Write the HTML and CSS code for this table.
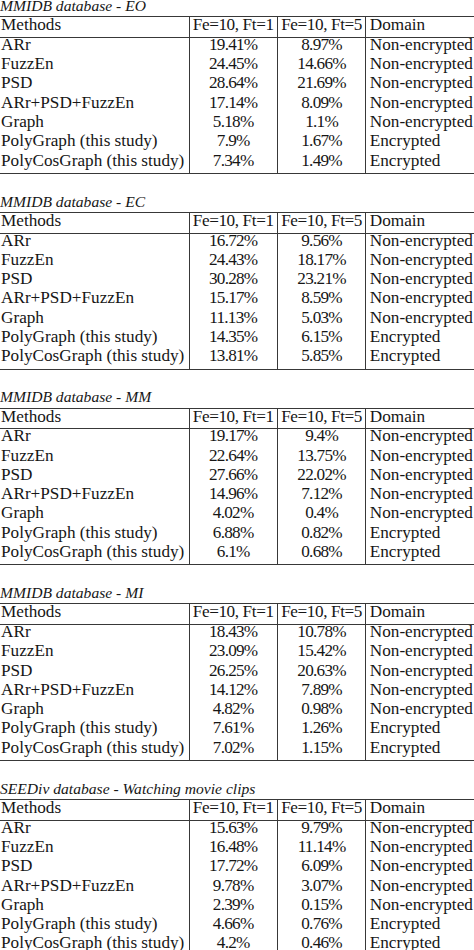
FILE: index.html
```html
<!DOCTYPE html>
<html lang="en">
<head>
<meta charset="utf-8">
<title>Results tables</title>
<link rel="stylesheet" href="styles.css">
</head>
<body>
<main class="page">
  <section class="block">
    <p class="caption">MMIDB database - EO</p>
    <table class="results">
      <thead><tr><th class="m">Methods</th><th class="n">Fe=10, Ft=1</th><th class="n">Fe=10, Ft=5</th><th class="d">Domain</th></tr></thead>
      <tbody>
        <tr><td class="m">ARr</td><td class="n">19.41%</td><td class="n">8.97%</td><td class="d">Non-encrypted</td></tr>
        <tr><td class="m">FuzzEn</td><td class="n">24.45%</td><td class="n">14.66%</td><td class="d">Non-encrypted</td></tr>
        <tr><td class="m">PSD</td><td class="n">28.64%</td><td class="n">21.69%</td><td class="d">Non-encrypted</td></tr>
        <tr><td class="m">ARr+PSD+FuzzEn</td><td class="n">17.14%</td><td class="n">8.09%</td><td class="d">Non-encrypted</td></tr>
        <tr><td class="m">Graph</td><td class="n">5.18%</td><td class="n">1.1%</td><td class="d">Non-encrypted</td></tr>
        <tr><td class="m">PolyGraph (this study)</td><td class="n">7.9%</td><td class="n">1.67%</td><td class="d">Encrypted</td></tr>
        <tr><td class="m">PolyCosGraph (this study)</td><td class="n">7.34%</td><td class="n">1.49%</td><td class="d">Encrypted</td></tr>
      </tbody>
    </table>
  </section>
  <section class="block">
    <p class="caption">MMIDB database - EC</p>
    <table class="results">
      <thead><tr><th class="m">Methods</th><th class="n">Fe=10, Ft=1</th><th class="n">Fe=10, Ft=5</th><th class="d">Domain</th></tr></thead>
      <tbody>
        <tr><td class="m">ARr</td><td class="n">16.72%</td><td class="n">9.56%</td><td class="d">Non-encrypted</td></tr>
        <tr><td class="m">FuzzEn</td><td class="n">24.43%</td><td class="n">18.17%</td><td class="d">Non-encrypted</td></tr>
        <tr><td class="m">PSD</td><td class="n">30.28%</td><td class="n">23.21%</td><td class="d">Non-encrypted</td></tr>
        <tr><td class="m">ARr+PSD+FuzzEn</td><td class="n">15.17%</td><td class="n">8.59%</td><td class="d">Non-encrypted</td></tr>
        <tr><td class="m">Graph</td><td class="n">11.13%</td><td class="n">5.03%</td><td class="d">Non-encrypted</td></tr>
        <tr><td class="m">PolyGraph (this study)</td><td class="n">14.35%</td><td class="n">6.15%</td><td class="d">Encrypted</td></tr>
        <tr><td class="m">PolyCosGraph (this study)</td><td class="n">13.81%</td><td class="n">5.85%</td><td class="d">Encrypted</td></tr>
      </tbody>
    </table>
  </section>
  <section class="block">
    <p class="caption">MMIDB database - MM</p>
    <table class="results">
      <thead><tr><th class="m">Methods</th><th class="n">Fe=10, Ft=1</th><th class="n">Fe=10, Ft=5</th><th class="d">Domain</th></tr></thead>
      <tbody>
        <tr><td class="m">ARr</td><td class="n">19.17%</td><td class="n">9.4%</td><td class="d">Non-encrypted</td></tr>
        <tr><td class="m">FuzzEn</td><td class="n">22.64%</td><td class="n">13.75%</td><td class="d">Non-encrypted</td></tr>
        <tr><td class="m">PSD</td><td class="n">27.66%</td><td class="n">22.02%</td><td class="d">Non-encrypted</td></tr>
        <tr><td class="m">ARr+PSD+FuzzEn</td><td class="n">14.96%</td><td class="n">7.12%</td><td class="d">Non-encrypted</td></tr>
        <tr><td class="m">Graph</td><td class="n">4.02%</td><td class="n">0.4%</td><td class="d">Non-encrypted</td></tr>
        <tr><td class="m">PolyGraph (this study)</td><td class="n">6.88%</td><td class="n">0.82%</td><td class="d">Encrypted</td></tr>
        <tr><td class="m">PolyCosGraph (this study)</td><td class="n">6.1%</td><td class="n">0.68%</td><td class="d">Encrypted</td></tr>
      </tbody>
    </table>
  </section>
  <section class="block">
    <p class="caption">MMIDB database - MI</p>
    <table class="results">
      <thead><tr><th class="m">Methods</th><th class="n">Fe=10, Ft=1</th><th class="n">Fe=10, Ft=5</th><th class="d">Domain</th></tr></thead>
      <tbody>
        <tr><td class="m">ARr</td><td class="n">18.43%</td><td class="n">10.78%</td><td class="d">Non-encrypted</td></tr>
        <tr><td class="m">FuzzEn</td><td class="n">23.09%</td><td class="n">15.42%</td><td class="d">Non-encrypted</td></tr>
        <tr><td class="m">PSD</td><td class="n">26.25%</td><td class="n">20.63%</td><td class="d">Non-encrypted</td></tr>
        <tr><td class="m">ARr+PSD+FuzzEn</td><td class="n">14.12%</td><td class="n">7.89%</td><td class="d">Non-encrypted</td></tr>
        <tr><td class="m">Graph</td><td class="n">4.82%</td><td class="n">0.98%</td><td class="d">Non-encrypted</td></tr>
        <tr><td class="m">PolyGraph (this study)</td><td class="n">7.61%</td><td class="n">1.26%</td><td class="d">Encrypted</td></tr>
        <tr><td class="m">PolyCosGraph (this study)</td><td class="n">7.02%</td><td class="n">1.15%</td><td class="d">Encrypted</td></tr>
      </tbody>
    </table>
  </section>
  <section class="block">
    <p class="caption">SEEDiv database - Watching movie clips</p>
    <table class="results">
      <thead><tr><th class="m">Methods</th><th class="n">Fe=10, Ft=1</th><th class="n">Fe=10, Ft=5</th><th class="d">Domain</th></tr></thead>
      <tbody>
        <tr><td class="m">ARr</td><td class="n">15.63%</td><td class="n">9.79%</td><td class="d">Non-encrypted</td></tr>
        <tr><td class="m">FuzzEn</td><td class="n">16.48%</td><td class="n">11.14%</td><td class="d">Non-encrypted</td></tr>
        <tr><td class="m">PSD</td><td class="n">17.72%</td><td class="n">6.09%</td><td class="d">Non-encrypted</td></tr>
        <tr><td class="m">ARr+PSD+FuzzEn</td><td class="n">9.78%</td><td class="n">3.07%</td><td class="d">Non-encrypted</td></tr>
        <tr><td class="m">Graph</td><td class="n">2.39%</td><td class="n">0.15%</td><td class="d">Non-encrypted</td></tr>
        <tr><td class="m">PolyGraph (this study)</td><td class="n">4.66%</td><td class="n">0.76%</td><td class="d">Encrypted</td></tr>
        <tr><td class="m">PolyCosGraph (this study)</td><td class="n">4.2%</td><td class="n">0.46%</td><td class="d">Encrypted</td></tr>
      </tbody>
    </table>
  </section>
</main>
</body>
</html>
```
FILE: styles.css
```css
html, body {
  margin: 0;
  padding: 0;
  background: #ffffff;
}

body {
  width: 474px;
  height: 950px;
  overflow: hidden;
  color: #161616;
  font-family: "Liberation Serif", "Times New Roman", serif;
}

.page {
  padding-top: 0.1px;
  margin-top: -4.1px;
}

.block {
  margin: 0 0 17.85px 0;
}

.caption {
  margin: 0 0 1.3px 0;
  font-style: italic;
  font-size: 15.6px;
  line-height: 19px;
  white-space: nowrap;
}

/* table laid out as a grid so fractional row heights are kept exactly */
.results {
  display: grid;
  grid-template-columns: 188.5px 88.4px 88.4px 160px;
  grid-template-rows: 21.6px repeat(6, 19.29px) 20.29px;
  width: max-content;
  border-spacing: 0;
  font-size: 17.2px;
}

.results thead,
.results tbody,
.results tr {
  display: contents;
}

.results th,
.results td {
  display: block;
  box-sizing: border-box;
  padding: 0;
  margin: 0;
  font-weight: normal;
  white-space: nowrap;
}

.results th {
  line-height: 16px;
  border-top: 1px solid #383838;
  border-bottom: 1px solid #383838;
}

.results td {
  line-height: 14.8px;
}

.results tbody tr:last-child td {
  border-bottom: 1px solid #383838;
}

.results .m {
  text-align: left;
  padding-left: 1px;
}

.results .n {
  text-align: center;
  border-left: 1px solid #383838;
  letter-spacing: -0.75px;
}

.results th.n {
  letter-spacing: -0.4px;
}

.results .d {
  text-align: left;
  padding-left: 3.5px;
  border-left: 1px solid #383838;
}
```
